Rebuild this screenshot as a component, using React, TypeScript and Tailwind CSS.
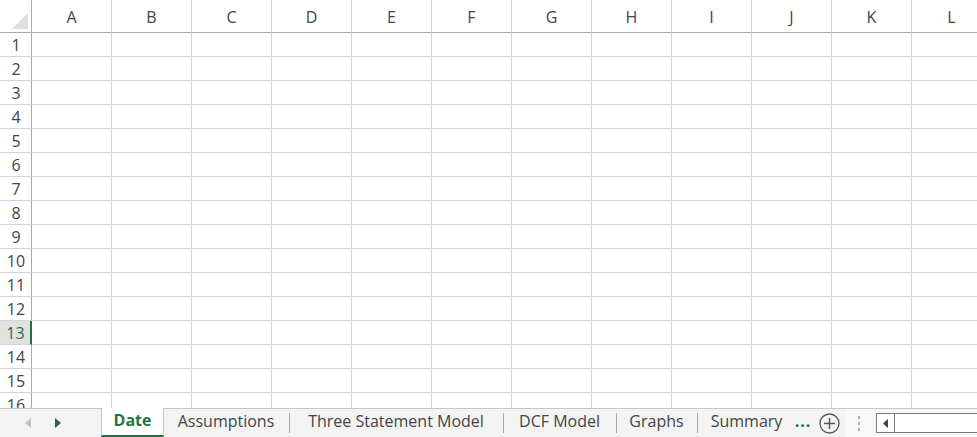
const COLS = ['A', 'B', 'C', 'D', 'E', 'F', 'G', 'H', 'I', 'J', 'K', 'L']
const ROWS = Array.from({ length: 16 }, (_, i) => i + 1)
const SELECTED_ROW = 13

const TABS = [
  { name: 'Assumptions', w: 'w-[125px]' },
  { name: 'Three Statement Model', w: 'w-[213px]' },
  { name: 'DCF Model', w: 'w-[112px]' },
  { name: 'Graphs', w: 'w-[80px]' },
]

function Sheet() {
  return (
    <div className="flex-1 overflow-hidden bg-white">
      <div className="grid grid-cols-[32px_repeat(12,80px)] auto-rows-[24px] [grid-template-rows:33px]">
        {/* corner */}
        <div className="relative h-[33px] border-b border-r border-[#ababab]">
          <svg className="absolute left-[12px] top-[13px]" width="16" height="16" viewBox="0 0 16 16">
            <polygon points="16,0 16,16 0,16" fill="#dfdfdf" />
          </svg>
        </div>
        {COLS.map((c) => (
          <div
            key={c}
            className="flex h-[33px] items-center justify-center border-b border-r border-b-[#ababab] border-r-[#d4d4d4] pt-px text-[16px] text-[#444]"
          >
            {c}
          </div>
        ))}

        {ROWS.map((r) => {
          const sel = r === SELECTED_ROW
          return (
            <div key={r} className="contents">
              <div
                className={
                  sel
                    ? 'flex items-center justify-center border-b border-r-2 border-b-[#d4d4d4] border-r-[#217346] bg-[#e1e1e1] pl-px text-[16px] text-[#217346]'
                    : 'flex items-center justify-center border-b border-r border-b-[#d4d4d4] border-r-[#ababab] pl-px text-[16px] text-[#444]'
                }
              >
                {r}
              </div>
              {COLS.map((c) => (
                <div key={c} className="border-b border-r border-[#d4d4d4]" />
              ))}
            </div>
          )
        })}
      </div>
    </div>
  )
}

function TabBar() {
  return (
    <div className="flex h-[29px] shrink-0 border-t border-[#c6c6c6] bg-[#f3f3f3]">
      {/* nav arrows */}
      <div className="flex w-[101px] shrink-0 items-center">
        <svg className="ml-[25px]" width="6" height="10" viewBox="0 0 6 10">
          <polygon points="6,0 6,10 0,5" fill="#c4c4c4" />
        </svg>
        <svg className="ml-[24px]" width="6" height="10" viewBox="0 0 6 10">
          <polygon points="0,0 0,10 6,5" fill="#1d6b3f" />
        </svg>
      </div>

      {/* active tab */}
      <div className="-mt-px flex h-[29px] w-[63px] shrink-0 items-center justify-center border-x border-b-2 border-x-[#c6c6c6] border-b-[#217346] bg-white pb-[3px] text-[16px] font-bold text-[#217346]">
        Date
      </div>

      {TABS.map((t) => (
        <div key={t.name} className="flex shrink-0 items-center">
          <div className={`${t.w} flex items-center justify-center pb-[5px] pr-px text-[16px] text-[#444]`}>{t.name}</div>
          <div className="h-[20px] w-px bg-[#a6a6a6]" />
        </div>
      ))}

      <div className="flex w-[92px] shrink-0 items-center justify-center pb-[5px] pl-[5px] text-[16px] text-[#444]">Summary</div>
      <div className="flex w-[24px] shrink-0 items-center justify-center pb-[4px] pl-[2px] text-[16px] font-bold tracking-[1px] text-[#217346]">
        ...
      </div>
      <div className="flex w-[31px] shrink-0 items-center justify-center">
        <svg width="21" height="21" viewBox="0 0 21 21">
          <circle cx="10.5" cy="10.5" r="9.5" fill="none" stroke="#595959" strokeWidth="1.3" />
          <path d="M10.5 5 V16 M5 10.5 H16" stroke="#595959" strokeWidth="1.5" />
        </svg>
      </div>

      {/* splitter + scrollbar */}
      <div className="flex flex-1 items-center bg-[#f8f8f8]">
        <div className="ml-[13px] flex flex-col gap-[3px]">
          <div className="h-[3px] w-[2px] bg-[#b0b0b0]" />
          <div className="h-[3px] w-[2px] bg-[#b0b0b0]" />
          <div className="h-[3px] w-[2px] bg-[#b0b0b0]" />
        </div>
        <div className="ml-[16px] flex h-[20px] flex-1 border border-r-0 border-[#7a7a7a] bg-white">
          <div className="flex w-[18px] items-center justify-center border-r border-[#7a7a7a]">
            <svg width="5" height="9" viewBox="0 0 5 9">
              <polygon points="5,0 5,9 0,4.5" fill="#444" />
            </svg>
          </div>
        </div>
      </div>
    </div>
  )
}

export default function App() {
  return (
    <div className="flex h-[437px] w-[977px] flex-col overflow-hidden font-['Open_Sans',sans-serif]">
      <Sheet />
      <TabBar />
    </div>
  )
}
